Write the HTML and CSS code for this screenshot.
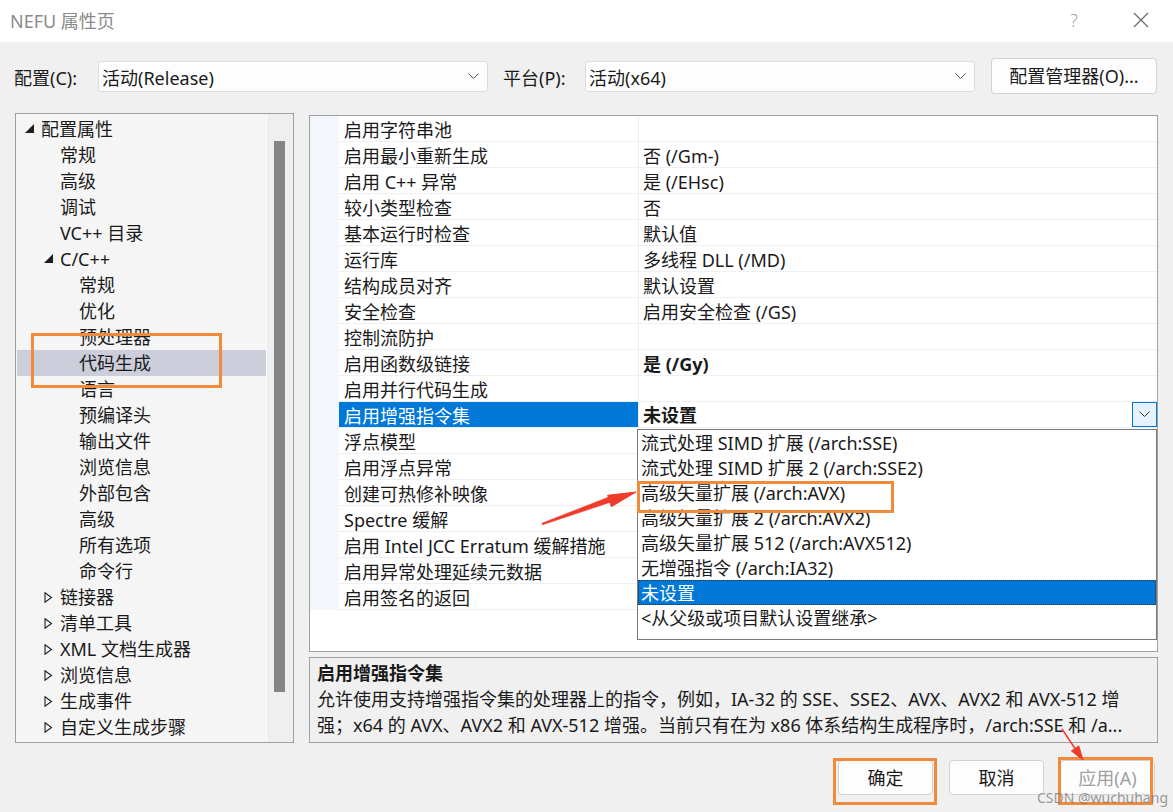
FILE: index.html
```html
<!DOCTYPE html>
<html lang="zh-CN">
<head>
  <meta charset="UTF-8">
  <meta name="viewport" content="width=device-width, initial-scale=1.0">
  <title>NEFU 属性页</title>
  <link rel="stylesheet" href="styles.css">
</head>
<body>
<div class="window">

  <div class="titlebar">
    <span class="title">NEFU 属性页</span>
    <span class="help">?</span>
    <svg class="close" width="16" height="16" viewBox="0 0 16 16">
      <path d="M1 1 L15 15 M15 1 L1 15" stroke="#6e6e6e" stroke-width="1.3" fill="none"/>
    </svg>
  </div>

  <div class="config-row">
    <label class="lbl lbl-config">配置(C):</label>
    <div class="combo">
      <span>活动(Release)</span>
      <svg width="11" height="7" viewBox="0 0 11 7"><polyline points="0.5,0.5 5.5,5.5 10.5,0.5" fill="none" stroke="#555" stroke-width="1"/></svg>
    </div>
    <label class="lbl lbl-platform">平台(P):</label>
    <div class="combo">
      <span>活动(x64)</span>
      <svg width="11" height="7" viewBox="0 0 11 7"><polyline points="0.5,0.5 5.5,5.5 10.5,0.5" fill="none" stroke="#555" stroke-width="1"/></svg>
    </div>
    <button class="btn btn-manager">配置管理器(O)...</button>
  </div>

  <div class="main">
    <div class="tree">
      <ul class="tree-list">
        <li class="node lv0"><span class="tog"><svg width="10" height="10" viewBox="0 0 10 10"><polygon points="9,0 9,9 0,9" fill="#1e1e1e"/></svg></span>配置属性</li>
        <li class="node lv1"><span class="tog"></span>常规</li>
        <li class="node lv1"><span class="tog"></span>高级</li>
        <li class="node lv1"><span class="tog"></span>调试</li>
        <li class="node lv1"><span class="tog"></span>VC++ 目录</li>
        <li class="node lv1"><span class="tog"><svg width="10" height="10" viewBox="0 0 10 10"><polygon points="9,0 9,9 0,9" fill="#1e1e1e"/></svg></span>C/C++</li>
        <li class="node lv2"><span class="tog"></span>常规</li>
        <li class="node lv2"><span class="tog"></span>优化</li>
        <li class="node lv2"><span class="tog"></span>预处理器</li>
        <li class="node lv2 selected"><span class="tog"></span>代码生成</li>
        <li class="node lv2"><span class="tog"></span>语言</li>
        <li class="node lv2"><span class="tog"></span>预编译头</li>
        <li class="node lv2"><span class="tog"></span>输出文件</li>
        <li class="node lv2"><span class="tog"></span>浏览信息</li>
        <li class="node lv2"><span class="tog"></span>外部包含</li>
        <li class="node lv2"><span class="tog"></span>高级</li>
        <li class="node lv2"><span class="tog"></span>所有选项</li>
        <li class="node lv2"><span class="tog"></span>命令行</li>
        <li class="node lv1"><span class="tog"><svg width="9" height="11" viewBox="0 0 9 11"><polygon points="1,0.8 7.5,5.5 1,10.2" fill="none" stroke="#1e1e1e" stroke-width="1.1"/></svg></span>链接器</li>
        <li class="node lv1"><span class="tog"><svg width="9" height="11" viewBox="0 0 9 11"><polygon points="1,0.8 7.5,5.5 1,10.2" fill="none" stroke="#1e1e1e" stroke-width="1.1"/></svg></span>清单工具</li>
        <li class="node lv1"><span class="tog"><svg width="9" height="11" viewBox="0 0 9 11"><polygon points="1,0.8 7.5,5.5 1,10.2" fill="none" stroke="#1e1e1e" stroke-width="1.1"/></svg></span>XML 文档生成器</li>
        <li class="node lv1"><span class="tog"><svg width="9" height="11" viewBox="0 0 9 11"><polygon points="1,0.8 7.5,5.5 1,10.2" fill="none" stroke="#1e1e1e" stroke-width="1.1"/></svg></span>浏览信息</li>
        <li class="node lv1"><span class="tog"><svg width="9" height="11" viewBox="0 0 9 11"><polygon points="1,0.8 7.5,5.5 1,10.2" fill="none" stroke="#1e1e1e" stroke-width="1.1"/></svg></span>生成事件</li>
        <li class="node lv1"><span class="tog"><svg width="9" height="11" viewBox="0 0 9 11"><polygon points="1,0.8 7.5,5.5 1,10.2" fill="none" stroke="#1e1e1e" stroke-width="1.1"/></svg></span>自定义生成步骤</li>
      </ul>
      <div class="scrollbar"><div class="thumb"></div></div>
    </div>

    <div class="right">
      <div class="grid">
        <div class="row"><div class="margin"></div><div class="name">启用字符串池</div><div class="value"></div></div>
        <div class="row"><div class="margin"></div><div class="name">启用最小重新生成</div><div class="value">否 (/Gm-)</div></div>
        <div class="row"><div class="margin"></div><div class="name">启用 C++ 异常</div><div class="value">是 (/EHsc)</div></div>
        <div class="row"><div class="margin"></div><div class="name">较小类型检查</div><div class="value">否</div></div>
        <div class="row"><div class="margin"></div><div class="name">基本运行时检查</div><div class="value">默认值</div></div>
        <div class="row"><div class="margin"></div><div class="name">运行库</div><div class="value">多线程 DLL (/MD)</div></div>
        <div class="row"><div class="margin"></div><div class="name">结构成员对齐</div><div class="value">默认设置</div></div>
        <div class="row"><div class="margin"></div><div class="name">安全检查</div><div class="value">启用安全检查 (/GS)</div></div>
        <div class="row"><div class="margin"></div><div class="name">控制流防护</div><div class="value"></div></div>
        <div class="row"><div class="margin"></div><div class="name">启用函数级链接</div><div class="value bold">是 (/Gy)</div></div>
        <div class="row"><div class="margin"></div><div class="name">启用并行代码生成</div><div class="value"></div></div>
        <div class="row active"><div class="margin"></div><div class="name">启用增强指令集</div>
          <div class="value bold">未设置
            <span class="drop-btn"><svg width="11" height="7" viewBox="0 0 11 7"><polyline points="0.5,0.5 5.5,5.5 10.5,0.5" fill="none" stroke="#333" stroke-width="1"/></svg></span>
          </div>
        </div>
        <div class="row"><div class="margin"></div><div class="name">浮点模型</div><div class="value"></div></div>
        <div class="row"><div class="margin"></div><div class="name">启用浮点异常</div><div class="value"></div></div>
        <div class="row"><div class="margin"></div><div class="name">创建可热修补映像</div><div class="value"></div></div>
        <div class="row"><div class="margin"></div><div class="name">Spectre 缓解</div><div class="value"></div></div>
        <div class="row"><div class="margin"></div><div class="name">启用 Intel JCC Erratum 缓解措施</div><div class="value"></div></div>
        <div class="row"><div class="margin"></div><div class="name">启用异常处理延续元数据</div><div class="value"></div></div>
        <div class="row"><div class="margin"></div><div class="name">启用签名的返回</div><div class="value"></div></div>

        <ul class="dropdown">
          <li>流式处理 SIMD 扩展 (/arch:SSE)</li>
          <li>流式处理 SIMD 扩展 2 (/arch:SSE2)</li>
          <li>高级矢量扩展 (/arch:AVX)</li>
          <li>高级矢量扩展 2 (/arch:AVX2)</li>
          <li>高级矢量扩展 512 (/arch:AVX512)</li>
          <li>无增强指令 (/arch:IA32)</li>
          <li class="picked">未设置</li>
          <li>&lt;从父级或项目默认设置继承&gt;</li>
        </ul>
      </div>

      <div class="desc">
        <div class="desc-title">启用增强指令集</div>
        <div class="desc-line">允许使用支持增强指令集的处理器上的指令，例如，IA-32 的 SSE、SSE2、AVX、AVX2 和 AVX-512 增</div>
        <div class="desc-line">强；x64 的 AVX、AVX2 和 AVX-512 增强。当前只有在为 x86 体系结构生成程序时，/arch:SSE 和 /a...</div>
      </div>
    </div>
  </div>

  <div class="buttons">
    <button class="btn btn-dlg">确定</button>
    <button class="btn btn-dlg">取消</button>
    <button class="btn btn-dlg disabled">应用(A)</button>
  </div>

  <!-- screenshot annotations -->
  <svg class="marks" width="1173" height="812" viewBox="0 0 1173 812">
    <g fill="none" stroke="#f28a3c" stroke-width="3">
      <rect x="32.5" y="334.5" width="188" height="52"/>
      <rect x="638.5" y="482.5" width="254" height="29"/>
      <rect x="834.5" y="759.5" width="101" height="44"/>
      <rect x="1059.5" y="758.5" width="92" height="45"/>
    </g>
    <g fill="#ee3b2b" stroke="#ee3b2b">
      <polygon points="542,523.2 542.4,524.8 611,502 609,497" stroke-width="0.6"/>
      <polygon points="636,492 611.4,506.7 607.6,495.3" stroke-width="1"/>
      <line x1="1062" y1="729" x2="1076" y2="750" stroke-width="1.5"/>
      <polygon points="1083,760 1078.8,745.9 1071.4,750.9" stroke-width="1"/>
    </g>
  </svg>
  <div class="watermark">CSDN @wuchuhang</div>
</div>
</body>
</html>
```

FILE: styles.css
```css
* {
  box-sizing: border-box;
}

body {
  margin: 0;
  font-family: "Noto Sans", "Noto Sans CJK SC", sans-serif;
  font-size: 18px;
  color: #1a1a1a;
}

.window {
  position: relative;
  width: 1173px;
  height: 812px;
  overflow: hidden;
  background: #f0f0f0;
}

/* title bar */
.titlebar {
  height: 42px;
  background: #fff;
  display: flex;
  align-items: center;
  padding: 0 0 3px 10px;
}
.title {
  color: #8a8a8a;
  flex: 1;
}
.help {
  color: #a0a0a0;
  font-weight: 300;
  margin-right: 55px;
}
.close {
  margin-right: 24px;
}

/* configuration row */
.config-row {
  display: flex;
  align-items: center;
  height: 36px;
  margin-top: 16px;
  padding-left: 14px;
}
.lbl {
  color: #1a1a1a;
  padding-top: 2px;
}
.lbl-config   { width: 84px; }
.lbl-platform { width: 82px; margin-left: 15px; }

.combo {
  width: 390px;
  height: 31px;
  background: #fdfdfd;
  border: 1px solid #dcdcdc;
  border-radius: 3px;
  display: flex;
  align-items: center;
  justify-content: space-between;
  padding: 1px 8px 0 3px;
}

.btn {
  font-family: inherit;
  font-size: 18px;
  line-height: 20px;
  color: #1a1a1a;
  background: #fdfdfd;
  border: 1px solid #d2d2d2;
  border-radius: 4px;
  padding: 0;
}
.btn-manager {
  width: 166px;
  height: 36px;
  margin-left: 16px;
}

/* main area */
.main {
  display: flex;
  margin-top: 19px;
  padding-left: 15px;
  height: 630px;
}

.tree {
  position: relative;
  width: 279px;
  height: 630px;
  border: 1px solid #a0a0a0;
  background: #f5f5f5;
  display: flex;
}
.tree-list {
  list-style: none;
  margin: 0;
  padding: 2px 0 0 1px;
  flex: 1;
}
.node {
  height: 26px;
  line-height: 26px;
  display: flex;
  align-items: center;
  white-space: nowrap;
}
.node.selected {
  background: #cccedb;
}
.tog {
  width: 16px;
  display: flex;
  align-items: center;
}
.lv0 { padding-left: 8px; }
.lv1 { padding-left: 27px; }
.lv2 { padding-left: 46px; }

.scrollbar {
  width: 27px;
  border-left: 1px solid #fafafa;
  background: #efefef;
  padding: 27px 0 0 7px;
}
.thumb {
  width: 11px;
  height: 551px;
  background: #858585;
}

.right {
  width: 849px;
  margin-left: 15px;
  margin-top: 2px;
  display: flex;
  flex-direction: column;
}

.grid {
  position: relative;
  height: 537px;
  border: 1px solid #a0a0a0;
  background: #fff;
}
.row {
  display: flex;
  height: 26px;
}
.margin {
  width: 29px;
  background: #f3f6fb;
}
.name {
  width: 299px;
  padding: 2px 0 0 5px;
  line-height: 24px;
  border-bottom: 1px solid #eef0f4;
  white-space: nowrap;
}
.value {
  flex: 1;
  padding: 2px 0 0 4px;
  line-height: 24px;
  border-left: 1px solid #eef0f4;
  border-bottom: 1px solid #eef0f4;
  white-space: nowrap;
  display: flex;
  justify-content: space-between;
}
.bold {
  font-weight: bold;
}
.row.active .name {
  background: #0078d7;
  color: #fff;
}
.row.active .value {
  padding-top: 0;
  align-items: center;
}
.drop-btn {
  width: 25px;
  height: 25px;
  background: #e5f1fb;
  border: 1px solid #0078d7;
  display: flex;
  align-items: center;
  justify-content: center;
}

.dropdown {
  position: absolute;
  left: 327px;
  top: 313px;
  width: 520px;
  height: 211px;
  margin: 0;
  padding: 0;
  list-style: none;
  background: #fff;
  border: 1px solid #7a7a7a;
}
.dropdown li {
  height: 25px;
  line-height: 27px;
  padding-left: 3px;
  white-space: nowrap;
}
.dropdown li.picked {
  background: #0078d7;
  color: #fff;
  outline: 1px dotted #333;
  outline-offset: -1px;
}

.desc {
  margin-top: 5px;
  height: 86px;
  border: 1px solid #a0a0a0;
  padding: 2px 0 0 7px;
}
.desc-title {
  font-weight: bold;
  line-height: 26px;
}
.desc-line {
  line-height: 26px;
  white-space: nowrap;
  overflow: hidden;
}

/* dialog buttons */
.buttons {
  display: flex;
  justify-content: flex-end;
  gap: 16px;
  margin-top: 17px;
  padding-right: 18px;
}
.btn-dlg {
  width: 95px;
  height: 35px;
}
.btn-dlg.disabled {
  color: #a0a0a0;
}

.marks {
  position: absolute;
  left: 0;
  top: 0;
  pointer-events: none;
}
.watermark {
  position: absolute;
  right: 5px;
  bottom: 7px;
  font-size: 14px;
  line-height: 14px;
  color: rgba(120, 120, 120, 0.75);
}
```
